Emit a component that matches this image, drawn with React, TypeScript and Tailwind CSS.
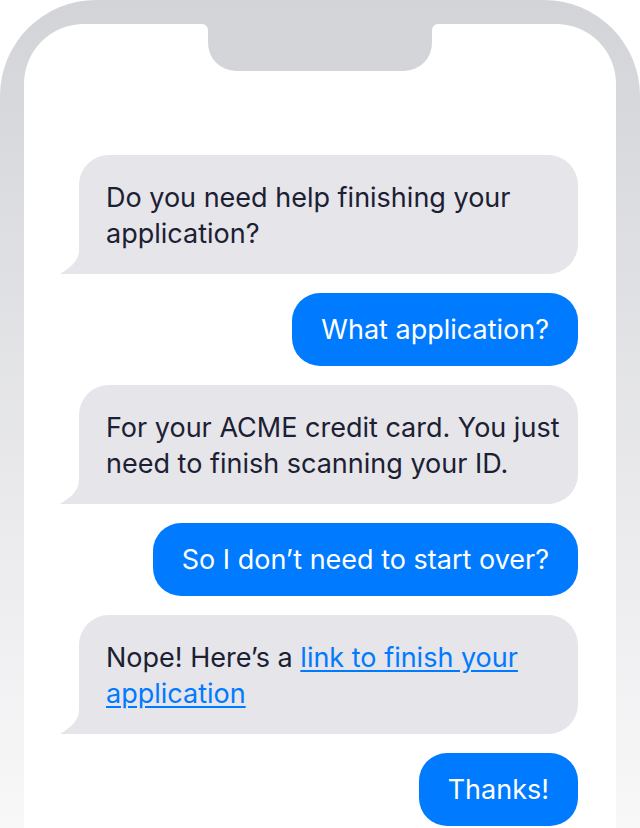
import React from "react";

const font = { fontFamily: "Inter, 'Noto Sans', sans-serif" };

const Tail: React.FC = () => (
  <svg
    className="absolute bottom-0 left-[-19px]"
    width="20"
    height="24"
    viewBox="0 0 20 24"
  >
    <path d="M19 0 L20 0 L20 24 L0 24 C8 19 19 12 19 0 Z" fill="#e5e5ea" />
  </svg>
);

const Incoming: React.FC<{ children: React.ReactNode }> = ({ children }) => (
  <div className="relative w-[499px] bg-[#e5e5ea] rounded-[30px] rounded-bl-none pl-[27px] pr-[20px] pt-[25px] pb-[22px] text-[#1c2033] text-[27px] leading-[36px] whitespace-nowrap">
    {children}
    <Tail />
  </div>
);

const Outgoing: React.FC<{ children: React.ReactNode }> = ({ children }) => (
  <div className="self-end bg-[#007aff] rounded-[28px] px-[29px] pt-[19px] pb-[18px] text-white text-[27px] leading-[36px] whitespace-nowrap">
    {children}
  </div>
);

const App: React.FC = () => {
  return (
    <div
      className="w-[640px] h-[828px] overflow-hidden bg-linear-to-b from-[#d3d4d8] to-[#f8f8f9] rounded-t-[96px] pt-6 px-6"
      style={font}
    >
      <div className="relative h-full bg-white rounded-t-[60px]">
        {/* notch */}
        <div className="absolute left-[184px] top-0 w-[224px] h-[47px] bg-[#d4d5d9] rounded-b-[28px]" />
        <div className="absolute left-[178px] top-0 w-[6px] h-[6px] bg-[#d4d5d9]">
          <div className="w-full h-full bg-white rounded-tr-[6px]" />
        </div>
        <div className="absolute left-[408px] top-0 w-[6px] h-[6px] bg-[#d4d5d9]">
          <div className="w-full h-full bg-white rounded-tl-[6px]" />
        </div>

        <div className="flex flex-col gap-[19px] pt-[131px] pl-[55px] pr-[38px]">
          <Incoming>
            Do you need help finishing your
            <br />
            application?
          </Incoming>
          <Outgoing>What application?</Outgoing>
          <Incoming>
            For your ACME credit card. You just
            <br />
            need to finish scanning your ID.
          </Incoming>
          <Outgoing>So I don’t need to start over?</Outgoing>
          <Incoming>
            Nope! Here’s a{" "}
            <a href="#" className="text-[#007aff] underline underline-offset-[3px]">
              link to finish your
              <br />
              application
            </a>
          </Incoming>
          <Outgoing>Thanks!</Outgoing>
        </div>
      </div>
    </div>
  );
};

export default App;
